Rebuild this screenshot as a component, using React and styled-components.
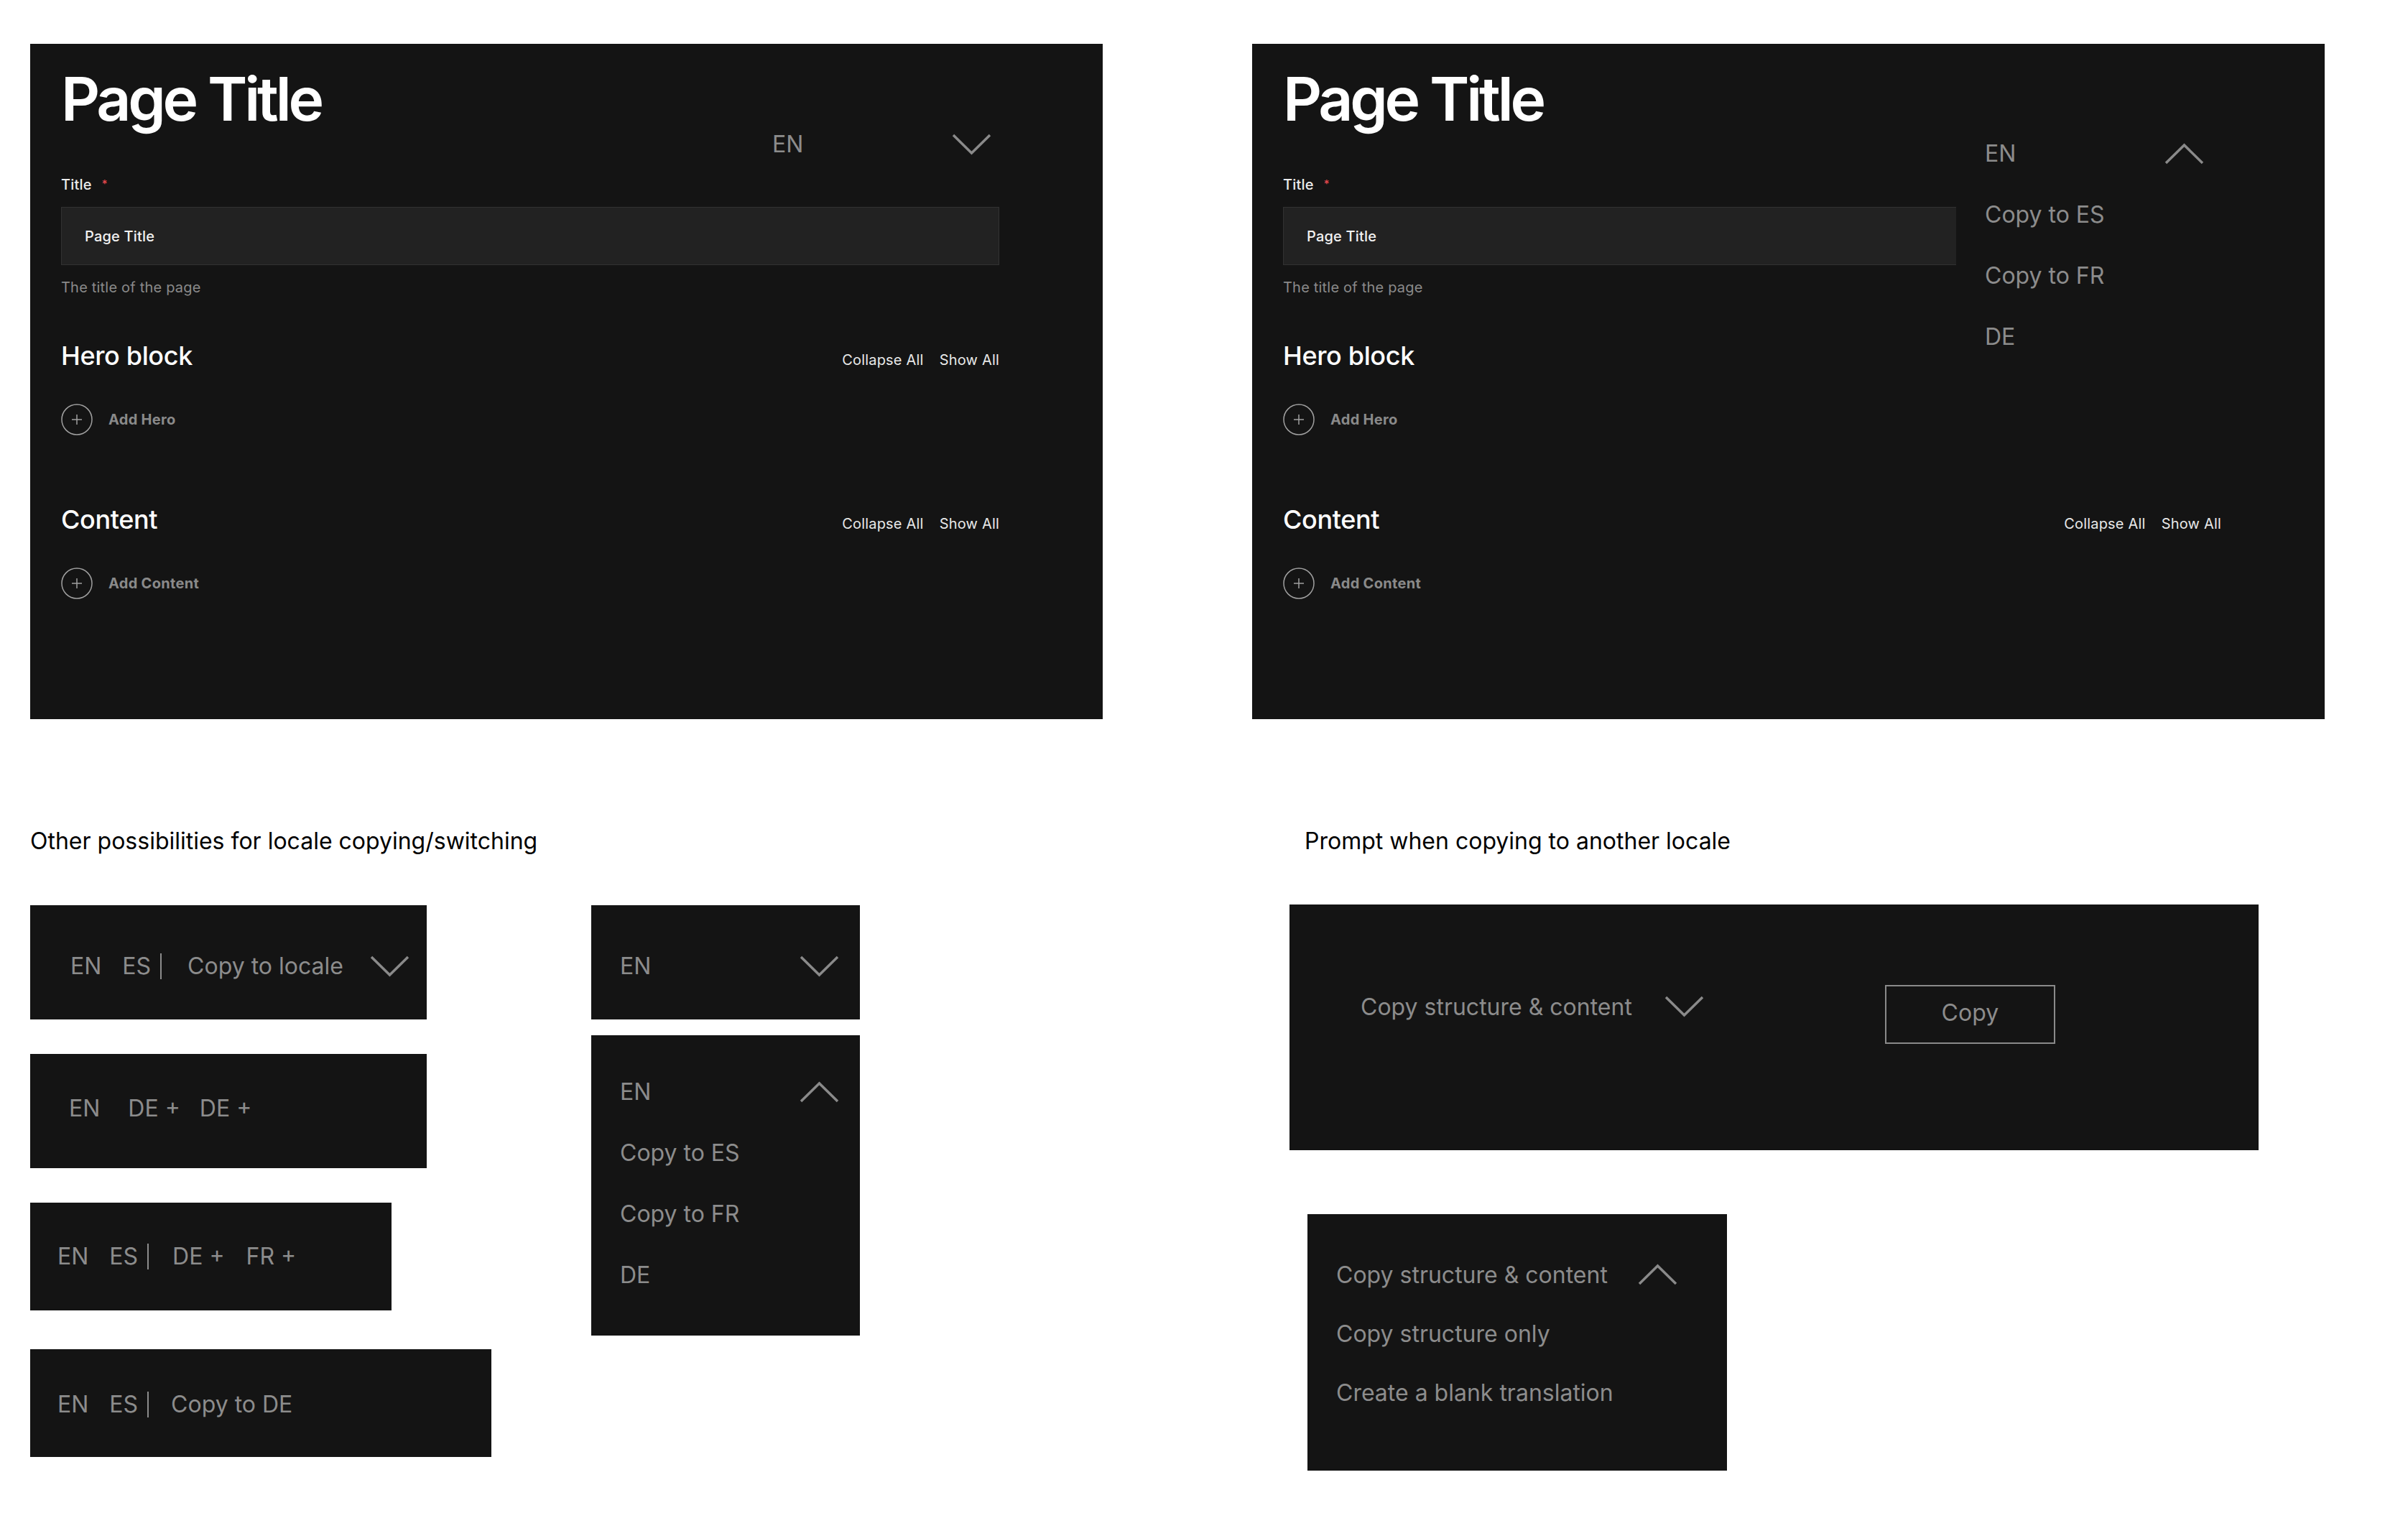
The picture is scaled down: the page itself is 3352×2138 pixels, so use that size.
import React from "react";
import styled, { createGlobalStyle, css } from "styled-components";

const GlobalStyle = createGlobalStyle`
  html, body { margin: 0; padding: 0; background: #ffffff; }
  body { font-family: "Inter", "Noto Sans", sans-serif; -webkit-font-smoothing: antialiased; }
  * { box-sizing: border-box; }
`;

const PANEL_BG = "#141414";
const MUTED = "#8c8c8c";

const Page = styled.div`
  width: 3352px;
  min-height: 2138px;
  background: #ffffff;
  padding: 61px 0 0 42px;
  display: flex;
  flex-direction: column;
`;

const PanelsRow = styled.div`
  display: flex;
  gap: 208px;
`;

const Panel = styled.section`
  position: relative;
  width: 1493px;
  height: 940px;
  background: ${PANEL_BG};
  padding: 35px 0 0 43px;
  color: #ffffff;
  overflow: hidden;
`;

const BigTitle = styled.h1`
  margin: 0;
  font-size: 84px;
  line-height: 84px;
  font-weight: 600;
  letter-spacing: -0.05em;
  color: #ffffff;
`;

const FieldLabel = styled.div`
  margin-top: 65px;
  display: flex;
  align-items: flex-start;
  font-size: 20px;
  line-height: 24px;
  font-weight: 500;
  letter-spacing: 0.01em;
  color: #ececec;
`;

const Required = styled.span`
  margin: 3px 0 0 14px;
  font-size: 15px;
  line-height: 15px;
  color: #e5484d;
`;

const TextInput = styled.div`
  margin-top: 19px;
  width: 1306px;
  height: 81px;
  display: flex;
  align-items: center;
  padding-left: 32px;
  background: #222222;
  border: 1px solid #323232;
  font-size: 20px;
  font-weight: 500;
  letter-spacing: 0.01em;
  color: #f2f2f2;
`;

const Helper = styled.div`
  margin-top: 19px;
  font-size: 20px;
  line-height: 24px;
  letter-spacing: 0.01em;
  color: #8a8a8a;
`;

const SectionHeader = styled.div`
  margin-top: ${(p) => p.$mt}px;
  width: 1306px;
  display: flex;
  align-items: baseline;
  justify-content: space-between;
`;

const SectionTitle = styled.h2`
  margin: 0;
  font-size: 36px;
  line-height: 44px;
  font-weight: 500;
  letter-spacing: -0.01em;
  color: #ffffff;
`;

const SectionActions = styled.div`
  display: flex;
  gap: 22px;
  font-size: 20px;
  line-height: 24px;
  letter-spacing: 0.01em;
  color: #e8e8e8;
`;

const AddRow = styled.div`
  margin-top: 45px;
  height: 44px;
  display: flex;
  align-items: center;
  gap: 22px;
  font-size: 20px;
  font-weight: 700;
  letter-spacing: 0.015em;
  color: #8a8a8a;
`;

const Dropdown = styled.div`
  width: ${(p) => p.$w || 374}px;
  height: ${(p) => p.$h}px;
  padding: ${(p) => p.$pt}px ${(p) => (p.$pr == null ? 29 : p.$pr)}px 0 40px;
  margin-top: ${(p) => p.$mt || 0}px;
  margin-left: ${(p) => p.$ml || 0}px;
  background: ${PANEL_BG};
  font-size: 32px;
  color: ${MUTED};
  ${(p) =>
    p.$overlay &&
    css`
      position: absolute;
      left: ${p.$x}px;
      top: ${p.$y}px;
    `}
`;

const DropRow = styled.div`
  height: ${(p) => p.$lh || 85}px;
  display: flex;
  align-items: center;
  justify-content: ${(p) => (p.$packed ? "flex-start" : "space-between")};
  white-space: nowrap;
`;

const ChevronSvg = styled.svg`
  flex: none;
  display: block;
  margin-left: ${(p) => p.$ml || 0}px;
`;

const Chevron = ({ up, ml }) => (
  <ChevronSvg $ml={ml} width="55" height="30" viewBox="0 0 55 30">
    <polyline
      points={up ? "2,28 27.5,3 53,28" : "2,2 27.5,27 53,2"}
      fill="none"
      stroke="#8a8a8a"
      strokeWidth="3.5"
    />
  </ChevronSvg>
);

const PlusCircle = () => (
  <svg width="44" height="44" viewBox="0 0 44 44">
    <circle cx="22" cy="22" r="21" fill="none" stroke="#a0a0a0" strokeWidth="1.5" />
    <line x1="15" y1="22" x2="29" y2="22" stroke="#a0a0a0" strokeWidth="1.5" />
    <line x1="22" y1="15" x2="22" y2="29" stroke="#a0a0a0" strokeWidth="1.5" />
  </svg>
);

const Lower = styled.div`
  margin-top: 150px;
  display: flex;
`;

const LeftSection = styled.div`
  width: 1753px;
`;

const RightSection = styled.div`
  flex: 1;
`;

const Caption = styled.p`
  margin: 0 0 0 ${(p) => p.$ml || 0}px;
  font-size: 32px;
  line-height: 40px;
  color: #000000;
`;

const Columns = styled.div`
  margin-top: 69px;
  display: flex;
`;

const Stack = styled.div`
  width: ${(p) => p.$w}px;
  display: flex;
  flex-direction: column;
  align-items: flex-start;
`;

const LocaleBar = styled.div`
  width: ${(p) => p.$w}px;
  height: ${(p) => p.$h}px;
  margin-top: ${(p) => p.$mt || 0}px;
  padding: ${(p) => p.$pt || 0}px 0 ${(p) => p.$pb || 0}px ${(p) => p.$pl}px;
  display: flex;
  align-items: center;
  background: ${PANEL_BG};
  font-size: 32px;
  color: ${MUTED};
`;

const Item = styled.span`
  margin-left: ${(p) => p.$ml || 0}px;
  line-height: 40px;
  white-space: nowrap;
`;

const Divider = styled.span`
  flex: none;
  width: 2px;
  height: 36px;
  margin-left: ${(p) => p.$ml || 0}px;
  background: ${MUTED};
`;

const Prompt = styled.div`
  margin-top: 68px;
  width: 1349px;
  height: 342px;
  padding-left: 99px;
  display: flex;
  align-items: flex-start;
  background: ${PANEL_BG};
  font-size: 32px;
  color: ${MUTED};
`;

const SelectGroup = styled.div`
  margin-top: 122px;
  height: 40px;
  display: flex;
  align-items: center;
  white-space: nowrap;
`;

const OutlineButton = styled.button`
  margin: 112px 0 0 252px;
  width: 237px;
  height: 82px;
  padding: 0 0 6px;
  background: transparent;
  border: 2px solid #8a8a8a;
  font-family: inherit;
  font-size: 32px;
  color: ${MUTED};
`;

const EditorBody = () => (
  <>
    <BigTitle>Page Title</BigTitle>
    <FieldLabel>
      Title<Required>*</Required>
    </FieldLabel>
    <TextInput>Page Title</TextInput>
    <Helper>The title of the page</Helper>

    <SectionHeader $mt={61}>
      <SectionTitle>Hero block</SectionTitle>
      <SectionActions>
        <span>Collapse All</span>
        <span>Show All</span>
      </SectionActions>
    </SectionHeader>
    <AddRow>
      <PlusCircle />
      Add Hero
    </AddRow>

    <SectionHeader $mt={95}>
      <SectionTitle>Content</SectionTitle>
      <SectionActions>
        <span>Collapse All</span>
        <span>Show All</span>
      </SectionActions>
    </SectionHeader>
    <AddRow>
      <PlusCircle />
      Add Content
    </AddRow>
  </>
);

const localeOptions = ["Copy to ES", "Copy to FR", "DE"];

const LocaleSelect = ({ open, ...rest }) => (
  <Dropdown $h={open ? 418 : 159} $pt={open ? 36 : 42} {...rest}>
    <DropRow>
      <span>EN</span>
      <Chevron up={open} />
    </DropRow>
    {open && localeOptions.map((o) => <DropRow key={o}>{o}</DropRow>)}
  </Dropdown>
);

export default function App() {
  return (
    <>
      <GlobalStyle />
      <Page>
        <PanelsRow>
          <Panel>
            <EditorBody />
            <LocaleSelect $overlay $x={993} $y={55} />
          </Panel>
          <Panel>
            <EditorBody />
            <LocaleSelect open $overlay $x={980} $y={74} />
          </Panel>
        </PanelsRow>

        <Lower>
          <LeftSection>
            <Caption>Other possibilities for locale copying/switching</Caption>
            <Columns>
              <Stack $w={781}>
                <LocaleBar $w={552} $h={159} $pl={56} $pt={10}>
                  <Item>EN</Item>
                  <Item $ml={29}>ES</Item>
                  <Divider $ml={13} />
                  <Item $ml={36}>Copy to locale</Item>
                  <Chevron ml={37} />
                </LocaleBar>
                <LocaleBar $w={552} $h={159} $pl={54} $pb={8} $mt={48}>
                  <Item>EN</Item>
                  <Item $ml={39}>DE +</Item>
                  <Item $ml={27}>DE +</Item>
                </LocaleBar>
                <LocaleBar $w={503} $h={150} $pl={38} $mt={48}>
                  <Item>EN</Item>
                  <Item $ml={29}>ES</Item>
                  <Divider $ml={13} />
                  <Item $ml={33}>DE +</Item>
                  <Item $ml={30}>FR +</Item>
                </LocaleBar>
                <LocaleBar $w={642} $h={150} $pl={38} $pt={4} $mt={54}>
                  <Item>EN</Item>
                  <Item $ml={29}>ES</Item>
                  <Divider $ml={13} />
                  <Item $ml={31}>Copy to DE</Item>
                </LocaleBar>
              </Stack>
              <Stack $w={374}>
                <LocaleSelect />
                <LocaleSelect open $mt={22} />
              </Stack>
            </Columns>
          </LeftSection>

          <RightSection>
            <Caption $ml={21}>Prompt when copying to another locale</Caption>
            <Prompt>
              <SelectGroup>
                <span>Copy structure &amp; content</span>
                <Chevron ml={45} />
              </SelectGroup>
              <OutlineButton type="button">Copy</OutlineButton>
            </Prompt>
            <Dropdown $w={584} $h={357} $pt={43} $pr={0} $mt={89} $ml={25}>
              <DropRow $lh={82} $packed>
                <span>Copy structure &amp; content</span>
                <Chevron up ml={42} />
              </DropRow>
              <DropRow $lh={82}>Copy structure only</DropRow>
              <DropRow $lh={82}>Create a blank translation</DropRow>
            </Dropdown>
          </RightSection>
        </Lower>
      </Page>
    </>
  );
}
